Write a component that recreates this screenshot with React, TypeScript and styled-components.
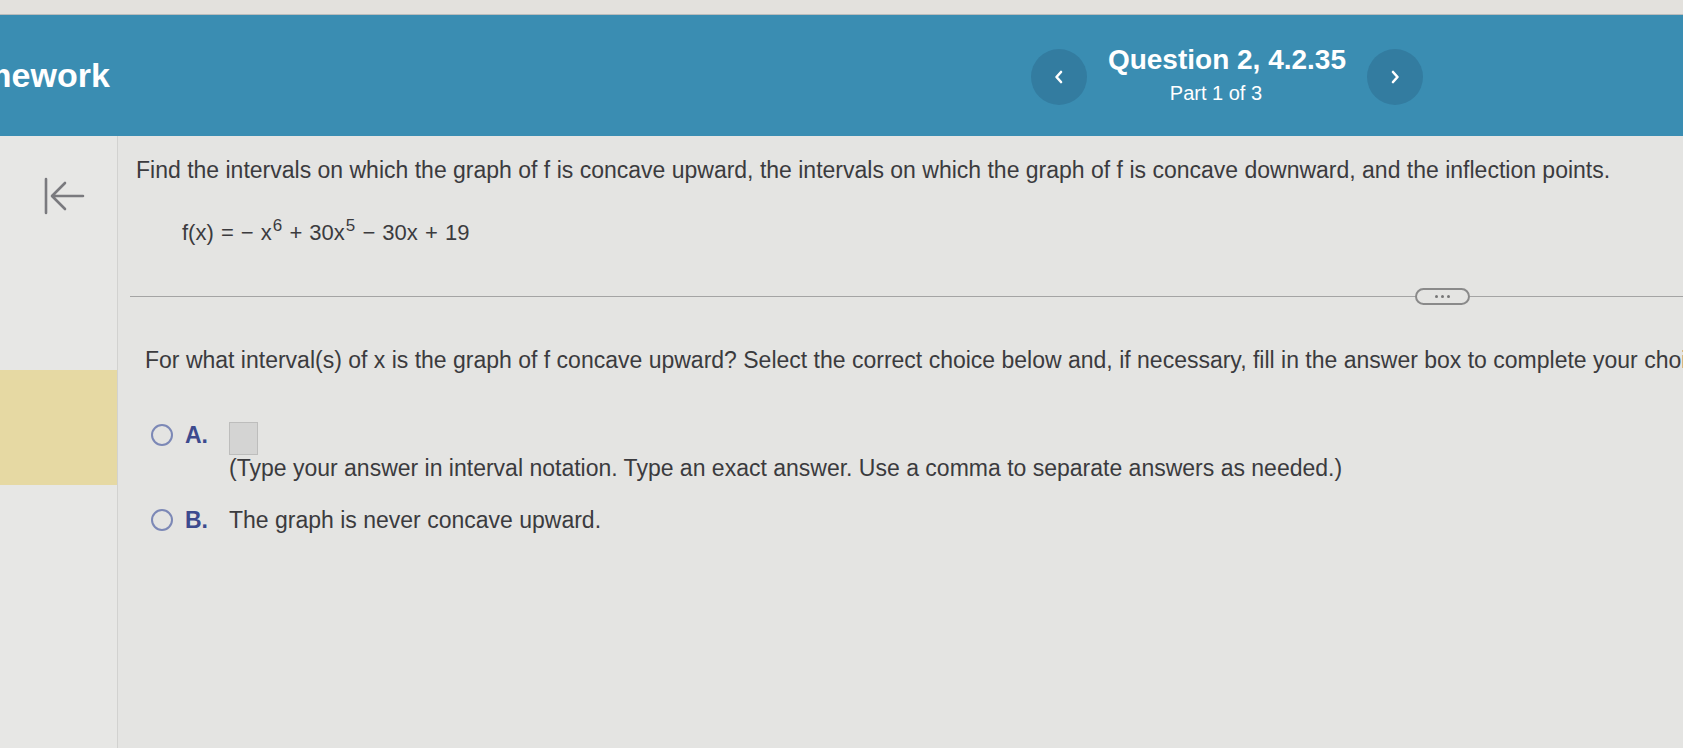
import React from 'react';
import styled, { createGlobalStyle } from 'styled-components';

const GlobalStyle = createGlobalStyle`
  html, body {
    margin: 0;
    padding: 0;
    background: #e4e4e2;
    overflow: hidden;
  }
  body {
    font-family: 'Liberation Sans', Arial, Helvetica, sans-serif;
    color: #3b3b3e;
  }
`;

const Page = styled.div`
  width: 1683px;
  height: 748px;
  display: flex;
  flex-direction: column;
  overflow: hidden;
`;

const TopStrip = styled.div`
  height: 14px;
  background: #e3e1dd;
  border-bottom: 1px solid #b9bcbc;
`;

const Header = styled.header`
  height: 121px;
  background: #3a8db2;
  display: flex;
  align-items: center;
  color: #fff;
  overflow: hidden;
`;

const Title = styled.h1`
  margin: 0 0 0 -64px;
  font-size: 34px;
  font-weight: bold;
  white-space: nowrap;
`;

const Nav = styled.div`
  margin-left: auto;
  margin-right: 260px;
  display: flex;
  align-items: center;
  gap: 21px;
  padding-top: 3px;
`;

const NavButton = styled.button`
  width: 56px;
  height: 56px;
  border-radius: 50%;
  border: none;
  background: #337ca0;
  color: #fff;
  display: flex;
  align-items: center;
  justify-content: center;
  padding: 0;
`;

const QuestionInfo = styled.div`
  display: flex;
  flex-direction: column;
  align-items: center;
  margin-top: -6px;
`;

const QuestionTitle = styled.div`
  font-size: 28px;
  font-weight: bold;
  line-height: 32px;
  white-space: nowrap;
`;

const PartLabel = styled.div`
  font-size: 20px;
  line-height: 24px;
  margin-top: 5px;
  padding-right: 22px;
`;

const Body = styled.div`
  flex: 1;
  display: flex;
  min-width: 0;
`;

const Sidebar = styled.aside`
  width: 117px;
  flex-shrink: 0;
  border-right: 1px solid #d2d2d0;
  background: #e7e7e5;
  display: flex;
  flex-direction: column;
`;

const BackIcon = styled.div`
  margin: 41px 0 0 43px;
  height: 38px;
`;

const Highlight = styled.div`
  margin-top: 155px;
  height: 115px;
  background: #e6d9a3;
`;

const Main = styled.main`
  flex: 1;
  min-width: 0;
  overflow: hidden;
  padding: 21px 0 0 12px;
  display: flex;
  flex-direction: column;
  font-size: 23px;
  line-height: 26px;
`;

const Prompt = styled.p`
  margin: 0 0 0 6px;
  white-space: nowrap;
`;

const Formula = styled.div`
  margin: 37px 0 0 52px;
  font-size: 22px;
  word-spacing: 1px;
`;

const Sup = styled.sup`
  font-size: 17px;
  line-height: 0;
  vertical-align: 9px;
  margin-left: 1px;
`;

const Divider = styled.div`
  margin-top: 42px;
  display: flex;
  align-items: center;
`;

const Rule = styled.div<{ $grow?: boolean }>`
  height: 1px;
  background: #a4a4a4;
  ${(p) => (p.$grow ? 'flex: 1;' : 'width: 213px;')}
`;

const MorePill = styled.div`
  width: 51px;
  height: 13px;
  border: 2px solid #8a8a8a;
  border-radius: 9px;
  display: flex;
  align-items: center;
  justify-content: center;
  gap: 3px;
`;

const Dot = styled.span`
  width: 3px;
  height: 3px;
  border-radius: 50%;
  background: #777;
`;

const SubQuestion = styled.p`
  margin: 42px 0 0 15px;
  white-space: nowrap;
`;

const Options = styled.div`
  margin: 49px 0 0 21px;
  display: flex;
  flex-direction: column;
  gap: 26px;
`;

const Option = styled.div`
  display: grid;
  grid-template-columns: 22px 32px auto;
  column-gap: 12px;
  align-items: start;
`;

const Radio = styled.span`
  width: 22px;
  height: 22px;
  box-sizing: border-box;
  border: 2px solid #7c88b6;
  border-radius: 50%;
  margin-top: 2px;
`;

const Letter = styled.span`
  font-weight: bold;
  color: #3c4a8e;
`;

const AnswerCell = styled.div`
  display: flex;
  flex-direction: column;
`;

const AnswerBox = styled.span`
  width: 29px;
  height: 33px;
  box-sizing: border-box;
  background: #d4d4d3;
  border: 1px solid #bdbdbc;
`;

const Hint = styled.span`
  white-space: nowrap;
`;

const ChoiceText = styled.span``;

const Chevron = ({ dir }: { dir: 'left' | 'right' }) => (
  <svg width="12" height="16" viewBox="0 0 12 16">
    <path
      d={dir === 'left' ? 'M8 3 L3.5 8 L8 13' : 'M4 3 L8.5 8 L4 13'}
      fill="none"
      stroke="#fff"
      strokeWidth="2.6"
      strokeLinecap="round"
      strokeLinejoin="round"
    />
  </svg>
);

const App = () => (
  <Page>
    <GlobalStyle />
    <TopStrip />
    <Header>
      <Title>Homework</Title>
      <Nav>
        <NavButton aria-label="Previous question">
          <Chevron dir="left" />
        </NavButton>
        <QuestionInfo>
          <QuestionTitle>Question 2, 4.2.35</QuestionTitle>
          <PartLabel>Part 1 of 3</PartLabel>
        </QuestionInfo>
        <NavButton aria-label="Next question">
          <Chevron dir="right" />
        </NavButton>
      </Nav>
    </Header>
    <Body>
      <Sidebar>
        <BackIcon>
          <svg width="42" height="38" viewBox="0 0 42 38">
            <path
              d="M3 2 V36 M40 19 H10 M22 6 L9 19 L22 32"
              fill="none"
              stroke="#7a7a7e"
              strokeWidth="2.6"
              strokeLinecap="round"
              strokeLinejoin="round"
            />
          </svg>
        </BackIcon>
        <Highlight />
      </Sidebar>
      <Main>
        <Prompt>
          Find the intervals on which the graph of f is concave upward, the intervals on which the
          graph of f is concave downward, and the inflection points.
        </Prompt>
        <Formula>
          f(x) = − x<Sup>6</Sup> + 30x<Sup>5</Sup> − 30x + 19
        </Formula>
        <Divider>
          <Rule $grow />
          <MorePill>
            <Dot />
            <Dot />
            <Dot />
          </MorePill>
          <Rule />
        </Divider>
        <SubQuestion>
          For what interval(s) of x is the graph of f concave upward? Select the correct choice below
          and, if necessary, fill in the answer box to complete your choice.
        </SubQuestion>
        <Options>
          <Option>
            <Radio />
            <Letter>A.</Letter>
            <AnswerCell>
              <AnswerBox />
              <Hint>
                (Type your answer in interval notation. Type an exact answer. Use a comma to separate
                answers as needed.)
              </Hint>
            </AnswerCell>
          </Option>
          <Option>
            <Radio />
            <Letter>B.</Letter>
            <ChoiceText>The graph is never concave upward.</ChoiceText>
          </Option>
        </Options>
      </Main>
    </Body>
  </Page>
);

export default App;
